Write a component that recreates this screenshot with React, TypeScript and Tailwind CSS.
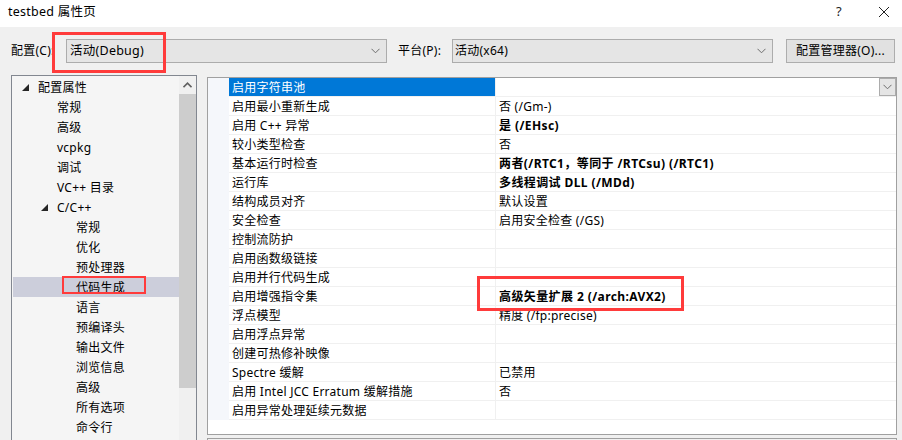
import React from "react";

const font = { fontFamily: '"Noto Sans", "Noto Sans CJK SC", sans-serif' };

function Chevron({ className = "" }: { className?: string }) {
  return (
    <svg width="9" height="6" viewBox="0 0 9 6" className={className}>
      <polyline points="0.5,0.8 4.5,4.8 8.5,0.8" fill="none" stroke="#6d6d6d" strokeWidth="1" />
    </svg>
  );
}

function Tri() {
  return (
    <svg width="7" height="7" viewBox="0 0 7 7">
      <polygon points="7,0 7,7 0,7" fill="#262626" />
    </svg>
  );
}

const tree: { t: string; lvl: number; exp?: boolean; sel?: boolean }[] = [
  { t: "配置属性", lvl: 0, exp: true },
  { t: "常规", lvl: 1 },
  { t: "高级", lvl: 1 },
  { t: "vcpkg", lvl: 1 },
  { t: "调试", lvl: 1 },
  { t: "VC++ 目录", lvl: 1 },
  { t: "C/C++", lvl: 1, exp: true },
  { t: "常规", lvl: 2 },
  { t: "优化", lvl: 2 },
  { t: "预处理器", lvl: 2 },
  { t: "代码生成", lvl: 2, sel: true },
  { t: "语言", lvl: 2 },
  { t: "预编译头", lvl: 2 },
  { t: "输出文件", lvl: 2 },
  { t: "浏览信息", lvl: 2 },
  { t: "高级", lvl: 2 },
  { t: "所有选项", lvl: 2 },
  { t: "命令行", lvl: 2 },
];

const rows: { n: string; v: string; b?: boolean }[] = [
  { n: "启用字符串池", v: "" },
  { n: "启用最小重新生成", v: "否 (/Gm-)" },
  { n: "启用 C++ 异常", v: "是 (/EHsc)", b: true },
  { n: "较小类型检查", v: "否" },
  { n: "基本运行时检查", v: "两者(/RTC1，等同于 /RTCsu) (/RTC1)", b: true },
  { n: "运行库", v: "多线程调试 DLL (/MDd)", b: true },
  { n: "结构成员对齐", v: "默认设置" },
  { n: "安全检查", v: "启用安全检查 (/GS)" },
  { n: "控制流防护", v: "" },
  { n: "启用函数级链接", v: "" },
  { n: "启用并行代码生成", v: "" },
  { n: "启用增强指令集", v: "高级矢量扩展 2 (/arch:AVX2)", b: true },
  { n: "浮点模型", v: "精度 (/fp:precise)" },
  { n: "启用浮点异常", v: "" },
  { n: "创建可热修补映像", v: "" },
  { n: "Spectre 缓解", v: "已禁用" },
  { n: "启用 Intel JCC Erratum 缓解措施", v: "否" },
  { n: "启用异常处理延续元数据", v: "" },
];

export default function App() {
  return (
    <div className="relative w-[902px] h-[440px] overflow-hidden bg-[#f0f0f0] text-[12px] tracking-[0.25px] text-black" style={font}>
      {/* title bar */}
      <div className="h-[27px] bg-white flex items-center pl-[8px] pr-[12px]">
        <span className="text-[12.5px] flex-1 leading-none mt-[-2px]">testbed 属性页</span>
        <span className="text-[13px] text-[#222] mr-[36px] mt-[-4px]">?</span>
        <svg width="12" height="12" viewBox="0 0 12 12" className="mt-[-4px]">
          <path d="M1 1 L11 11 M11 1 L1 11" stroke="#222" strokeWidth="1" />
        </svg>
      </div>

      {/* config row */}
      <div className="flex items-center h-[24px] mt-[12px] pl-[11px]">
        <span className="w-[55px]">配置(C):</span>
        <div className="w-[321px] h-[24px] bg-[#e5e5e5] border border-[#acacac] flex items-center pl-[3px] pr-[6px]">
          <span className="flex-1 text-[12.5px]">活动(Debug)</span>
          <Chevron />
        </div>
        <span className="ml-[11px] w-[54px]">平台(P):</span>
        <div className="w-[321px] h-[24px] bg-[#e5e5e5] border border-[#acacac] flex items-center pl-[2px] pr-[6px]">
          <span className="flex-1">活动(x64)</span>
          <Chevron />
        </div>
        <div className="ml-[13px] w-[109px] h-[24px] bg-[#e1e1e1] border border-[#adadad] flex items-center justify-center">
          配置管理器(O)...
        </div>
      </div>

      {/* main */}
      <div className="flex mt-[12px] pl-[11px]">
        {/* tree */}
        <div className="w-[186px] h-[380px] border border-[#828790] bg-[#f5f5f5] flex">
          <div className="flex-1 pt-[1px]">
            {tree.map((it, i) => (
              <div
                key={i}
                className={`h-[20px] flex items-center pt-[1px] ${it.sel ? "bg-[#cccedb] ml-[1px]" : ""}`}
              >
                <div className="flex items-center" style={{ paddingLeft: (it.sel ? 9 : 10) + it.lvl * 19 }}>
                  <span className="w-[16px] flex items-center">{it.exp ? <Tri /> : null}</span>
                  <span>{it.t}</span>
                </div>
              </div>
            ))}
          </div>
          <div className="w-[17px] bg-[#f0f0f0] flex flex-col">
            <div className="h-[18px] flex items-center justify-center">
              <svg width="9" height="6" viewBox="0 0 9 6">
                <polyline points="0.5,5.2 4.5,1.2 8.5,5.2" fill="none" stroke="#606060" strokeWidth="1.6" />
              </svg>
            </div>
            <div className="h-[294px] bg-[#cdcdcd]" />
          </div>
        </div>

        {/* grid */}
        <div className="ml-[10px] flex flex-col">
          <div className="mt-[2px] w-[690px] h-[358px] border border-[#a0a0a0] bg-white flex">
            <div className="w-[21px] h-[342px] bg-[#f5f7fb]" />
            <div className="flex-1 flex flex-col">
              {rows.map((r, i) => (
                <div key={i} className="h-[19px] flex border-b border-[#f0f0f0]">
                  <div
                    className={`w-[266px] flex items-center pl-[3px] pt-[2px] ${i === 0 ? "bg-[#0078d7] text-white" : ""}`}
                  >
                    {r.n}
                  </div>
                  <div className="w-[1px] bg-[#f0f0f0]" />
                  <div className={`flex-1 flex items-center pl-[3px] ${r.b ? "font-bold tracking-[0.4px]" : ""}`}>
                    <span className="pt-[2px]">{r.v}</span>
                    {i === 0 ? (
                      <div className="ml-auto w-[17px] h-[18px] bg-[#e5e5e5] border border-[#acacac] flex items-center justify-center">
                        <Chevron />
                      </div>
                    ) : null}
                  </div>
                </div>
              ))}
            </div>
          </div>
          <div className="mt-[3px] w-[690px] h-[20px] border border-[#a0a0a0] bg-[#f0f0f0]" />
        </div>
      </div>

      {/* red annotation boxes */}
      <div className="absolute left-[52px] top-[32px] w-[114px] h-[41px] border-[3px] border-[#ff3b3b]" />
      <div className="absolute left-[62px] top-[276px] w-[84px] h-[18px] border-[2px] border-[#ff3b3b]" />
      <div className="absolute left-[477px] top-[276px] w-[207px] h-[35px] border-[3px] border-[#ff3b3b]" />
    </div>
  );
}
